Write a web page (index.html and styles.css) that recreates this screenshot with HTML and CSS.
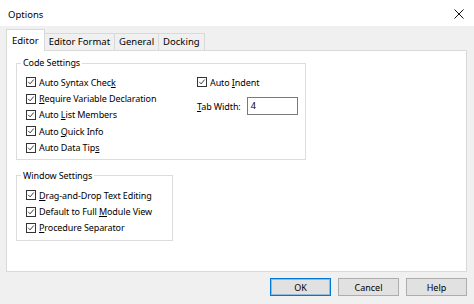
FILE: index.html
```html
<!DOCTYPE html>
<html lang="en">
<head>
  <meta charset="UTF-8" />
  <title>Options</title>
  <link rel="stylesheet" href="styles.css">
</head>
<body>

  <header class="titlebar">
    <span class="title">Options</span>
    <svg class="close" viewBox="0 0 10 10"><path d="M0.5 0.5 L9.5 9.5 M9.5 0.5 L0.5 9.5"/></svg>
  </header>

  <div class="tabs">
    <div class="tab active">Editor</div>
    <div class="tab">Editor Format</div>
    <div class="tab">General</div>
    <div class="tab">Docking</div>
  </div>

  <div class="panel">
    <fieldset class="group code">
      <legend>Code Settings</legend>
      <div class="group-body cols">
        <div class="col left">
          <div class="check"><span class="box"><svg viewBox="0 0 10 10"><path d="M1.5 4.8 L3.9 7.3 L8.4 1.9"/></svg></span><span>Auto Syntax Chec<u>k</u></span></div>
          <div class="check"><span class="box"><svg viewBox="0 0 10 10"><path d="M1.5 4.8 L3.9 7.3 L8.4 1.9"/></svg></span><span><u>R</u>equire Variable Declaration</span></div>
          <div class="check"><span class="box"><svg viewBox="0 0 10 10"><path d="M1.5 4.8 L3.9 7.3 L8.4 1.9"/></svg></span><span>Auto <u>L</u>ist Members</span></div>
          <div class="check"><span class="box"><svg viewBox="0 0 10 10"><path d="M1.5 4.8 L3.9 7.3 L8.4 1.9"/></svg></span><span>Auto <u>Q</u>uick Info</span></div>
          <div class="check"><span class="box"><svg viewBox="0 0 10 10"><path d="M1.5 4.8 L3.9 7.3 L8.4 1.9"/></svg></span><span>Auto Data Tip<u>s</u></span></div>
        </div>
        <div class="col right">
          <div class="check"><span class="box"><svg viewBox="0 0 10 10"><path d="M1.5 4.8 L3.9 7.3 L8.4 1.9"/></svg></span><span>Auto <u>I</u>ndent</span></div>
          <div class="tabwidth">
            <span><u>T</u>ab Width:</span>
            <span class="input">4</span>
          </div>
        </div>
      </div>
    </fieldset>

    <fieldset class="group window-set">
      <legend>Window Settings</legend>
      <div class="group-body">
        <div class="check"><span class="box"><svg viewBox="0 0 10 10"><path d="M1.5 4.8 L3.9 7.3 L8.4 1.9"/></svg></span><span><u>D</u>rag-and-Drop Text Editing</span></div>
        <div class="check"><span class="box"><svg viewBox="0 0 10 10"><path d="M1.5 4.8 L3.9 7.3 L8.4 1.9"/></svg></span><span>Default to Full <u>M</u>odule View</span></div>
        <div class="check"><span class="box"><svg viewBox="0 0 10 10"><path d="M1.5 4.8 L3.9 7.3 L8.4 1.9"/></svg></span><span><u>P</u>rocedure Separator</span></div>
      </div>
    </fieldset>
  </div>

  <div class="buttons">
    <button class="btn default">OK</button>
    <button class="btn">Cancel</button>
    <button class="btn">Help</button>
  </div>

</body>
</html>
```

FILE: styles.css
```css
* {
  box-sizing: border-box;
}

body {
  margin: 0;
  width: 474px;
  height: 304px;
  overflow: hidden;
  background-color: #f0f0f0;
  color: #000;
  font-family: "Noto Sans", "Open Sans", sans-serif;
  font-size: 9px;
  letter-spacing: -0.1px;
}

/* title bar */
.titlebar {
  height: 26px;
  background-color: #fff;
  display: flex;
  align-items: center;
  justify-content: space-between;
  padding: 2px 10px 0 8px;
}

.title {
  font-size: 9.5px;
  letter-spacing: 0;
}

.close {
  width: 10px;
  height: 10px;
  stroke: #111;
  stroke-width: 1;
  fill: none;
}

/* tabs */
.tabs {
  display: flex;
  align-items: flex-end;
  height: 21px;
  margin: 3px 0 0 6px;
  position: relative;
  z-index: 1;
}

.tab {
  height: 17px;
  padding: 0 4px;
  line-height: 16px;
  font-size: 9.5px;
  letter-spacing: 0;
  background-color: #f0f0f0;
  border-top: 1px solid #d9d9d9;
  border-right: 1px solid #d9d9d9;
}

.tab.active {
  height: 22px;
  margin-bottom: -1px;
  padding: 3px 5px 0 5px;
  background-color: #fff;
  border-left: 1px solid #d9d9d9;
}

/* panel */
.panel {
  height: 222px;
  margin: 0 7px 0 6px;
  padding: 6px 0 0 9px;
  background-color: #fff;
  border: 1px solid #d9d9d9;
}

.group {
  margin: 0;
  padding: 0;
  border: 1px solid #dcdcdc;
}

.group legend {
  margin-left: 4px;
  padding: 0 2px;
  line-height: 12px;
}

.group-body {
  padding: 5px 0 3px 9px;
}

.code {
  width: 290px;
}

.window-set {
  width: 157px;
  margin-top: 10px;
}

.window-set .group-body {
  padding-bottom: 4px;
}

.cols {
  display: flex;
}

.col.left {
  width: 171px;
}

.check {
  display: flex;
  align-items: center;
  gap: 3px;
  height: 16.4px;
  white-space: nowrap;
}

.box {
  width: 10px;
  height: 10px;
  flex: none;
  display: flex;
  border: 1px solid #333;
  background-color: #fff;
}

.box svg {
  width: 100%;
  height: 100%;
  fill: none;
  stroke: #222;
  stroke-width: 1.1;
}

.tabwidth {
  display: flex;
  align-items: center;
  gap: 6px;
  margin-top: 7px;
}

.input {
  width: 51px;
  height: 18px;
  padding-left: 3px;
  line-height: 16px;
  border: 1px solid #7a7a7a;
  background-color: #fff;
}

/* bottom buttons */
.buttons {
  display: flex;
  justify-content: flex-end;
  gap: 7px;
  margin: 6px 7px 0 0;
}

.btn {
  width: 61px;
  height: 18px;
  padding: 0;
  font-family: inherit;
  font-size: 9px;
  color: #000;
  background-color: #e1e1e1;
  border: 1px solid #adadad;
  border-radius: 0;
}

.btn.default {
  border-color: #0078d7;
  box-shadow: inset 0 0 0 1px rgba(0, 120, 215, 0.35);
}
```
